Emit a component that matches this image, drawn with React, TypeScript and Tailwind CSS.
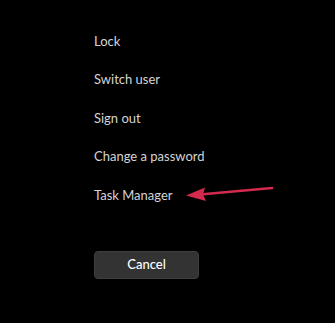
export default function App() {
  const items = ['Lock', 'Switch user', 'Sign out', 'Change a password', 'Task Manager']
  return (
    <div
      className="relative w-[335px] h-[323px] bg-black overflow-hidden"
      style={{ fontFamily: 'Lato, "Open Sans", sans-serif' }}
    >
      <div className="flex flex-col pl-[94px] pt-[22px]">
        {items.map((t) => (
          <div key={t} className="h-[38.6px] flex items-center text-[13px] text-[#d4d4d4]">
            {t}
          </div>
        ))}
        <button
          type="button"
          className="mt-[36px] w-[105px] h-[28px] rounded-[4px] bg-[#333333] border border-[#3e3e3e] text-white text-[13px] font-medium flex items-center justify-center"
        >
          Cancel
        </button>
      </div>

      {/* annotation arrow */}
      <svg className="absolute left-0 top-0" width="335" height="323" viewBox="0 0 335 323">
        <line x1="272" y1="188" x2="200" y2="194.5" stroke="#d42a4e" strokeWidth="2.5" strokeLinecap="round" />
        <polygon points="186,195.5 205,187.5 203,194.5 206,201" fill="#d42a4e" />
      </svg>
    </div>
  )
}
